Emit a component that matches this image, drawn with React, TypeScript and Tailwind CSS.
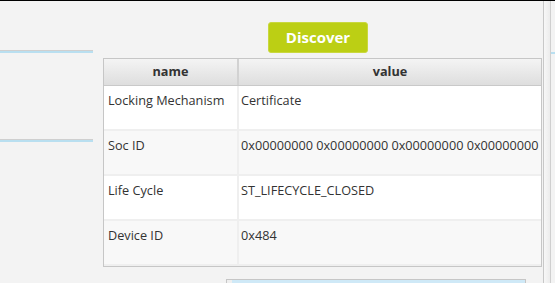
import React from 'react';

const rows = [
  { name: 'Locking Mechanism', value: 'Certificate' },
  { name: 'Soc ID', value: '0x00000000 0x00000000 0x00000000 0x00000000' },
  { name: 'Life Cycle', value: 'ST_LIFECYCLE_CLOSED' },
  { name: 'Device ID', value: '0x484' },
];

export default function App() {
  return (
    <div
      className="w-[555px] h-[283px] overflow-hidden bg-[#f3f3f3] border-t border-black flex"
      style={{ fontFamily: '"Open Sans", "Noto Sans", sans-serif' }}
    >
      {/* left divider lines */}
      <div className="w-[93px] shrink-0 flex flex-col">
        <div className="mt-[49px] border-t border-[#cfcfcf] border-b-2 border-b-[#b9dff0]" />
        <div className="mt-[86px] border-t border-[#cfcfcf] border-b-2 border-b-[#b9dff0]" />
      </div>

      {/* main */}
      <div className="ml-[10px] w-[439px] shrink-0 flex flex-col">
        <div className="shrink-0 ml-[165px] mt-[21px] w-[100px] h-[31px] rounded-[3px] bg-[#bccf14] border border-[#c9d83e] flex items-center justify-center">
          <span className="text-white font-bold text-[15px] leading-none">Discover</span>
        </div>

        <div className="shrink-0 mt-[5px] border border-[#c6c6c6] text-[12.7px] text-[#333]">
          <div className="flex h-[27px] bg-gradient-to-b from-[#f4f4f4] to-[#dedede] border-b border-[#c9c9c9] font-bold">
            <div className="w-[135px] shrink-0 border-r-2 border-[#d2d2d2] flex items-center justify-center">name</div>
            <div className="flex-1 flex items-center justify-center">value</div>
          </div>
          {rows.map((r, i) => (
            <div
              key={r.name}
              className={`flex h-[45px] border-b-2 border-[#efefef] ${i % 2 === 0 ? 'bg-white' : 'bg-[#f8f8f8]'}`}
            >
              <div className="w-[135px] shrink-0 border-r-2 border-[#efefef] pl-[4px] pt-[6px] leading-[17px] whitespace-nowrap">
                {r.name}
              </div>
              <div className="flex-1 pl-[2px] pt-[6px] leading-[17px] whitespace-nowrap overflow-hidden">{r.value}</div>
            </div>
          ))}
        </div>

        <div className="shrink-0 ml-[123px] mt-[12px] w-[300px] h-[20px] border border-[#c6c6c6] pl-[5px] bg-[#efefef]">
          <div className="h-full bg-[#cfe9f7]" />
        </div>
      </div>

      {/* right edge */}
      <div className="ml-[1px] w-px shrink-0 bg-[#c8c8c8]" />
      <div className="w-[6px] shrink-0 bg-gradient-to-r from-[#f7f7f7] to-[#ececec]" />
      <div className="w-px shrink-0 bg-[#cfcfcf]" />
      <div className="flex-1 flex flex-col">
        <div className="mt-[51px] h-[2px] bg-[#b9dff0]" />
      </div>
    </div>
  );
}
